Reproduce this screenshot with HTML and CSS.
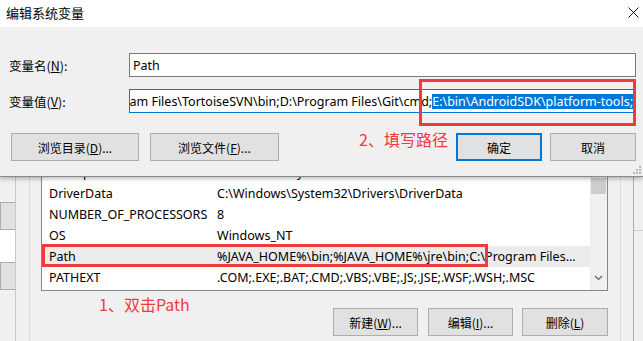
FILE: index.html
```html
<!DOCTYPE html>
<html lang="zh-CN">
<head>
    <meta charset="UTF-8">
    <title>编辑系统变量</title>
    <link rel="stylesheet" href="styles.css">
</head>
<body>
    <div class="screen">
        <div class="dialog">
            <div class="titlebar">
                <span class="title">编辑系统变量</span>
                <svg class="close" width="11" height="11" viewBox="0 0 11 11"><path d="M0.5 0.5 L10.5 10.5 M10.5 0.5 L0.5 10.5" stroke="#111" stroke-width="1"/></svg>
            </div>
            <div class="dialog-body">
                <div class="field">
                    <label>变量名(<u>N</u>):</label>
                    <div class="textbox-wrap">
                        <div class="textbox">Path</div>
                    </div>
                </div>
                <div class="field">
                    <label>变量值(<u>V</u>):</label>
                    <div class="textbox-wrap">
                        <div class="textbox focused">
                            <span class="value">C:\Program Files\TortoiseSVN\bin;D:\Program Files\Git\cmd;<span class="sel">E:\bin\AndroidSDK\platform-tools;</span></span>
                        </div>
                        <div class="mark mark-value"></div>
                    </div>
                </div>
                <div class="actions">
                    <button class="btn btn-wide">浏览目录(<u>D</u>)...</button>
                    <button class="btn btn-wide">浏览文件(<u>F</u>)...</button>
                    <span class="note note-top">2、填写路径</span>
                    <button class="btn btn-ok">确定</button>
                    <button class="btn">取消</button>
                </div>
            </div>
            <svg class="grip" width="8" height="8" viewBox="0 0 8 8" fill="#b8b8b8"><rect x="6" y="0" width="2" height="2"/><rect x="3" y="3" width="2" height="2"/><rect x="6" y="3" width="2" height="2"/><rect x="0" y="6" width="2" height="2"/><rect x="3" y="6" width="2" height="2"/><rect x="6" y="6" width="2" height="2"/></svg>
        </div>

        <div class="backdrop">
            <div class="edge">
                <div class="edge-btn"></div>
                <div class="edge-white"></div>
                <div class="edge-btn"></div>
            </div>
            <div class="window">
                <div class="group">
                    <div class="list">
                        <div class="rows">
                            <div class="row row-hidden"><span>ComSpec</span><span>C:\Windows\system32\cmd.exe</span></div>
                            <div class="row"><span>DriverData</span><span>C:\Windows\System32\Drivers\DriverData</span></div>
                            <div class="row"><span>NUMBER_OF_PROCESSORS</span><span>8</span></div>
                            <div class="row"><span>OS</span><span>Windows_NT</span></div>
                            <div class="row selected"><span>Path</span><span>%JAVA_HOME%\bin;%JAVA_HOME%\jre\bin;C:\Program Files...</span><div class="mark mark-row"></div></div>
                            <div class="row"><span>PATHEXT</span><span>.COM;.EXE;.BAT;.CMD;.VBS;.VBE;.JS;.JSE;.WSF;.WSH;.MSC</span></div>
                        </div>
                        <div class="scrollbar">
                            <div class="thumb"></div>
                            <svg class="arrow" width="9" height="6" viewBox="0 0 9 6"><path d="M1 1 L4.5 4.5 L8 1" fill="none" stroke="#606060" stroke-width="1.2"/></svg>
                        </div>
                    </div>
                    <div class="list-actions">
                        <span class="note note-bottom">1、双击Path</span>
                        <button class="btn btn-small">新建(<u>W</u>)...</button>
                        <button class="btn btn-small">编辑(<u>I</u>)...</button>
                        <button class="btn btn-small btn-last">删除(<u>L</u>)</button>
                    </div>
                </div>
            </div>
            <div class="edge-right"><div class="edge-right-top"></div></div>
        </div>
    </div>
</body>
</html>
```

FILE: styles.css
```css
body { margin: 0; font-family: "Noto Sans", "Noto Sans CJK SC", sans-serif; font-size: 12.5px; color: #000; background: #f0f0f0; }
.screen { width: 643px; height: 341px; overflow: hidden; background: #f0f0f0; }

/* front dialog */
.dialog { position: relative; z-index: 1; background: #f0f0f0; border-bottom: 1px solid #8a8a8a; box-shadow: 0 2px 4px rgba(0, 0, 0, 0.25); }
.titlebar { height: 27px; background: #fff; display: flex; align-items: center; justify-content: space-between; padding: 0 4px 0 6px; }
.title { font-family: "Noto Sans CJK SC", sans-serif; font-size: 13px; margin-top: -2px; }
.close { margin-top: -3px; }
.dialog-body { padding: 26px 7px 15px 9px; }
.field { display: flex; align-items: center; margin-bottom: 12px; }
.field label { width: 120px; flex-shrink: 0; font-family: "Noto Sans CJK SC", sans-serif; }
.textbox-wrap { position: relative; flex: 1; min-width: 0; }
.textbox { height: 24px; box-sizing: border-box; border: 1px solid #7a7a7a; background: #fff; display: flex; align-items: center; padding: 0 3px; white-space: nowrap; overflow: hidden; }
.textbox.focused { border-color: #0078d7; justify-content: flex-end; padding: 0 2px; }
.value { display: block; flex-shrink: 0; }
.sel { display: inline-block; background: #0078d7; color: #fff; line-height: 15px; }
.mark { position: absolute; border: 3px solid #f23a3d; box-sizing: border-box; pointer-events: none; }
.mark-value { left: 290px; top: -10px; right: 0; height: 47px; }

.actions { display: flex; align-items: flex-start; margin-top: 20px; padding-left: 2px; }
.btn { height: 28px; box-sizing: border-box; background: #e1e1e1; border: 1px solid #adadad; font-family: "Noto Sans CJK SC", sans-serif; font-size: 12px; color: #000; padding: 0; margin: 0; }
.btn-wide { width: 128px; margin-right: 11px; }
.btn-wide + .btn-wide { width: 129px; }
.btn-ok { width: 86px; border: 2px solid #0078d7; margin-right: 8px; }
.actions .btn:last-child { width: 86px; }
.note { font-family: "Noto Sans CJK SC", sans-serif; font-size: 16px; line-height: 16px; color: #f23a3d; }
.note-top { margin: -2px 8px 0 auto; }
.grip { position: absolute; right: 2px; bottom: 2px; }

/* window behind */
.backdrop { display: flex; height: 164px; }
.edge { width: 15px; border-right: 1px solid #c8c8c8; padding-top: 25px; }
.edge-btn { height: 26px; background: #e1e1e1; border: 1px solid #adadad; border-right: none; }
.edge-white { height: 32px; background: #fff; }
.window { flex: 1; padding-left: 13px; }
.group { width: 592px; height: 100%; box-sizing: border-box; border-left: 1px solid #dcdcdc; border-right: 1px solid #dcdcdc; padding: 0 12px 0 11px; }
.list { display: flex; height: 114px; box-sizing: border-box; border: 1px solid #828790; border-top: none; background: #fff; overflow: hidden; }
.rows { flex: 1; }
.row { position: relative; display: grid; grid-template-columns: 175px 365px; height: 21px; align-items: center; white-space: nowrap; }
.row span { overflow: hidden; }
.row span:first-child { padding-left: 7px; }
.row-hidden { margin-top: -15px; }
.row.selected { background: #ebebeb; }
.mark-row { left: 0; top: -2px; width: 446px; height: 23px; }
.scrollbar { position: relative; width: 17px; background: #f0f0f0; }
.thumb { margin: 1px 1px 0; height: 16px; background: #cdcdcd; }
.arrow { position: absolute; left: 4px; bottom: 9px; }
.list-actions { display: flex; align-items: flex-start; }
.note-bottom { margin: 5px auto 0 58px; }
.btn-small { width: 85px; margin-top: 17px; margin-left: 10px; }
.btn-last { width: 86px; margin-left: 9px; }
.edge-right { width: 9px; border-left: 1px solid #adadad; }
.edge-right-top { height: 53px; border-bottom: 1px solid #d0d0d0; }
```
